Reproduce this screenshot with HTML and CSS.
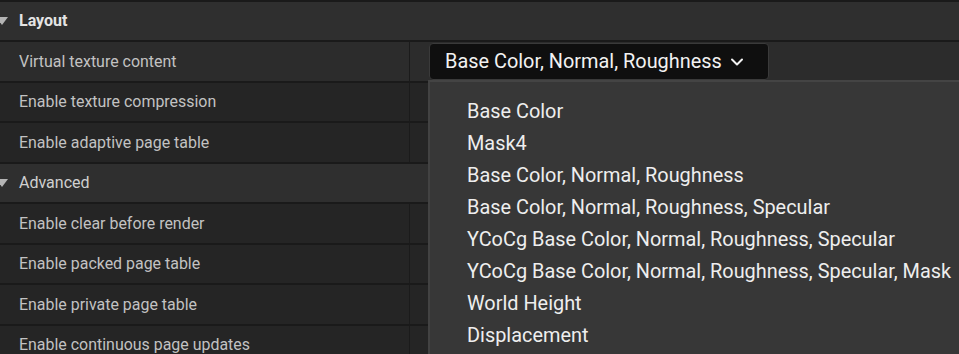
FILE: index.html
```html
<!DOCTYPE html>
<html>
<head>
<meta charset="utf-8">
<link rel="stylesheet" href="styles.css">
</head>
<body>
<div class="panel">
  <div class="row header"><span class="caret"></span><span class="label bold">Layout</span></div>
  <div class="row prop hover">
    <div class="name">Virtual texture content</div>
    <div class="value">
      <div class="combo">
        <span>Base Color, Normal, Roughness</span>
        <svg class="chev" width="14" height="10" viewBox="0 0 14 10"><path d="M2 2.5 L7 7.5 L12 2.5" fill="none" stroke="#f2f2f2" stroke-width="2" stroke-linecap="round" stroke-linejoin="round"/></svg>
      </div>
    </div>
  </div>
  <div class="row prop"><div class="name">Enable texture compression</div><div class="value"></div></div>
  <div class="row prop"><div class="name">Enable adaptive page table</div><div class="value"></div></div>
  <div class="row header"><span class="caret"></span><span class="label">Advanced</span></div>
  <div class="row prop"><div class="name">Enable clear before render</div><div class="value"></div></div>
  <div class="row prop"><div class="name">Enable packed page table</div><div class="value"></div></div>
  <div class="row prop"><div class="name">Enable private page table</div><div class="value"></div></div>
  <div class="row prop"><div class="name">Enable continuous page updates</div><div class="value"></div></div>

  <ul class="menu">
    <li>Base Color</li>
    <li>Mask4</li>
    <li>Base Color, Normal, Roughness</li>
    <li>Base Color, Normal, Roughness, Specular</li>
    <li>YCoCg Base Color, Normal, Roughness, Specular</li>
    <li>YCoCg Base Color, Normal, Roughness, Specular, Mask</li>
    <li>World Height</li>
    <li>Displacement</li>
  </ul>
</div>
</body>
</html>
```
FILE: styles.css
```css
html, body {
  margin: 0;
  padding: 0;
  background: #1a1a1a;
  overflow: hidden;
}
body {
  width: 959px;
  height: 354px;
  font-family: Roboto, "Liberation Sans", sans-serif;
}
.panel {
  position: relative;
  display: flex;
  flex-direction: column;
  gap: 2px;
  padding-top: 1.5px;
  background: #1a1a1a;
}
.row {
  height: 38.5px;
  flex: none;
  display: flex;
  align-items: center;
}
.header {
  background: #2f2f2f;
}
.caret {
  width: 0;
  height: 0;
  margin-left: -4px;
  border-left: 6px solid transparent;
  border-right: 6px solid transparent;
  border-top: 8px solid #b4b4b4;
  margin-top: 1px;
}
.header .label {
  margin-left: 11px;
  font-size: 16px;
  color: #d0d0d0;
}
.header .label.bold {
  font-weight: 700;
  color: #e4e4e4;
}
.prop {
  background: #252525;
  display: grid;
  grid-template-columns: 409px 1px 1fr;
}
.prop.hover {
  background: #2c2c2c;
}
.prop .name {
  grid-column: 1;
  padding-left: 19px;
  font-size: 15.95px;
  color: #c2c2c2;
  align-self: center;
}
.prop .value {
  grid-column: 3;
  height: 100%;
  display: flex;
  align-items: center;
  padding-left: 19px;
}
.prop::after {
  content: "";
  grid-column: 2;
  grid-row: 1;
  background: #1b1b1b;
  height: 100%;
}
.combo {
  box-sizing: border-box;
  width: 340px;
  height: 37px;
  background: #0f0f0f;
  border: 1px solid #3a3a3a;
  border-radius: 4px;
  display: flex;
  align-items: center;
  gap: 8px;
  padding-left: 15px;
  color: #f2f2f2;
  font-size: 19.9px;
}
.chev {
  margin-top: 1px;
}
.menu {
  position: absolute;
  left: 428px;
  top: 80px;
  width: 540px;
  height: 290px;
  margin: 0;
  padding: 14px 0 0 37px;
  box-sizing: border-box;
  list-style: none;
  background: #373737;
  border-left: 2px solid #424242;
  border-top: 2px solid #444444;
}
.menu li {
  height: 32px;
  line-height: 32px;
  font-size: 19.9px;
  color: #eeeeee;
  white-space: nowrap;
}
```
